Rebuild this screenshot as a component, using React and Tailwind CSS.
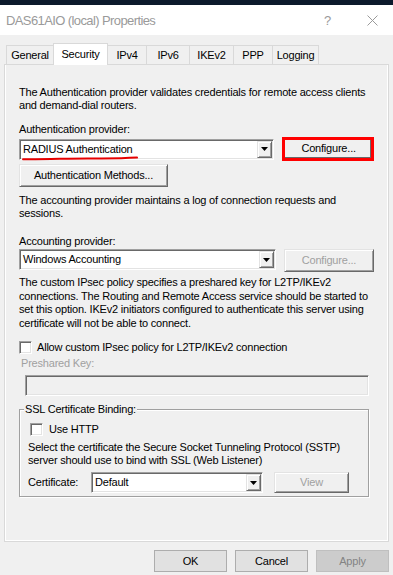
import React from 'react';

// Classic Win32 property sheet: "Security" page of the RRAS server properties.

const raised =
  'border border-t-[#e3e3e3] border-l-[#e3e3e3] border-r-[#696969] border-b-[#696969] shadow-[inset_1px_1px_0_#ffffff,inset_-1px_-1px_0_#a0a0a0]';
const sunken =
  'border border-t-[#a0a0a0] border-l-[#a0a0a0] border-r-white border-b-white shadow-[inset_1px_1px_0_#696969,inset_-1px_-1px_0_#e3e3e3]';

function Arrow() {
  return (
    <svg width="7" height="4" viewBox="0 0 7 4">
      <path d="M0 0h7L3.5 4z" fill="#000" />
    </svg>
  );
}

function Combo({ width, value, children }) {
  return (
    <div className={`relative flex items-center h-[21px] bg-white ${sunken} ${width}`}>
      <span className="flex-1 pl-[3px] truncate">{value}</span>
      <div className={`flex items-center justify-center w-[15px] h-[17px] mr-[1px] bg-[#f0f0f0] ${raised}`}>
        <Arrow />
      </div>
      {children}
    </div>
  );
}

function Button({ width, height = 'h-[23px]', disabled, children }) {
  return (
    <div
      className={`flex items-center justify-center bg-[#f0f0f0] ${raised} ${width} ${height} ${
        disabled ? 'text-[#a0a0a0]' : 'text-black'
      }`}
    >
      {children}
    </div>
  );
}

function Check({ className = '' }) {
  return <div className={`w-[13px] h-[13px] bg-white shrink-0 ${sunken} ${className}`} />;
}

const tabs = [
  { name: 'General', w: 'w-[48px]' },
  { name: 'Security', w: 'w-[55px]', active: true },
  { name: 'IPv4', w: 'w-[40px]' },
  { name: 'IPv6', w: 'w-[44px]' },
  { name: 'IKEv2', w: 'w-[45px]' },
  { name: 'PPP', w: 'w-[40px]' },
  { name: 'Logging', w: 'w-[47px]' },
];

export default function App() {
  return (
    <div className="w-[393px] h-[575px] overflow-hidden bg-[#f0f0f0] text-[11px] leading-[13px] tracking-[-0.2px] text-black font-['Liberation_Sans',Arial,sans-serif]">
      <div className="h-[5px] bg-[#0c1a2c]" />

      {/* title bar */}
      <div className="h-[30px] bg-white flex items-center pl-[6px] pr-[15px] text-[#9a9a9a]">
        <span className="flex-1 text-[13px] tracking-[-0.6px]">DAS61AIO (local) Properties</span>
        <span className="text-[13px] mr-[36px]">?</span>
        <svg width="11" height="11" viewBox="0 0 11 11">
          <path d="M0.5 0.5l10 10M10.5 0.5l-10 10" stroke="#9a9a9a" strokeWidth="1" />
        </svg>
      </div>

      {/* tabs */}
      <div className="flex items-end h-[21px] mt-[8px] pl-[6px]">
        {tabs.map((t, i) =>
          t.active ? (
            <div
              key={t.name}
              className={`relative z-10 -ml-px -mb-px h-[22px] flex items-center justify-center bg-white border border-b-0 border-[#d9d9d9] ${t.w}`}
            >
              {t.name}
            </div>
          ) : (
            <div
              key={t.name}
              className={`h-[19px] flex items-center justify-center bg-[#f0f0f0] border border-b-0 border-[#d9d9d9] ${
                i ? '-ml-px' : ''
              } ${t.w}`}
            >
              {t.name}
            </div>
          )
        )}
      </div>

      {/* page */}
      <div className="mx-[4px] h-[478px] border border-[#d9d9d9]">
        <div className="h-full border border-white border-t-0 px-[13px] pt-[21px]">
          <p>
            The Authentication provider validates credentials for remote access clients
            <br />
            and demand-dial routers.
          </p>

          <div className="mt-[11px]">Authentication provider:</div>
          <div className="mt-[1px] flex items-center h-[24px]">
            <Combo width="w-[259px]" value="RADIUS Authentication">
              <svg
                className="absolute left-[2px] top-[16px]"
                width="116"
                height="5"
                viewBox="0 0 116 5"
              >
                <path d="M1 3.2C30 3.4 45 2.2 70 2.4S105 2.2 115 1.6" stroke="#e60000" strokeWidth="2" fill="none" strokeLinecap="round" />
              </svg>
            </Combo>
            <div className="ml-[8px] w-[93px] h-[24px] border-[3px] border-[#ff0000] bg-[#f0f0f0] flex">
              <div className="flex-1 flex items-center justify-center border-r border-b border-[#696969] pl-[2px]">
                Configure...
              </div>
            </div>
          </div>

          <div className="mt-[3px]">
            <Button width="w-[149px]">Authentication Methods...</Button>
          </div>

          <p className="mt-[7px]">
            The accounting provider maintains a log of connection requests and
            <br />
            sessions.
          </p>

          <div className="mt-[15px]">Accounting provider:</div>
          <div className="mt-[1px] flex items-start h-[23px]">
            <Combo width="w-[259px]" value="Windows Accounting" />
            <div className="ml-[8px]">
              <Button width="w-[90px]" disabled>
                Configure...
              </Button>
            </div>
          </div>

          <p className="mt-[4px] leading-[13.5px]">
            The custom IPsec policy specifies a preshared key for L2TP/IKEv2
            <br />
            connections. The Routing and Remote Access service should be started to
            <br />
            set this option. IKEv2 initiators configured to authenticate this server using
            <br />
            certificate will not be able to connect.
          </p>

          <div className="mt-[11px] flex items-center h-[13px]">
            <Check />
            <span className="ml-[5px]">Allow custom IPsec policy for L2TP/IKEv2 connection</span>
          </div>

          <div className="mt-[3px] ml-[2px] text-[#a0a0a0]">Preshared Key:</div>
          <div className={`mt-[5px] ml-[6px] w-[344px] h-[21px] bg-[#f0f0f0] ${sunken}`} />

          {/* SSL group */}
          <div className="relative mt-[13px] w-[350px] border border-[#a0a0a0] shadow-[inset_1px_1px_0_#ffffff,1px_1px_0_#ffffff] pl-[8px] pt-[13px] pb-[3px]">
            <span className="absolute left-[4px] -top-[7px] px-[1px] bg-[#f0f0f0]">
              SSL Certificate Binding:
            </span>
            <div className="flex items-center h-[13px]">
              <Check className="ml-[2px]" />
              <span className="ml-[6px]">Use HTTP</span>
            </div>
            <p className="mt-[5px]">
              Select the certificate the Secure Socket Tunneling Protocol (SSTP)
              <br />
              server should use to bind with SSL (Web Listener)
            </p>
            <div className="mt-[5px] flex items-center h-[21px]">
              <span className="w-[63px]">Certificate:</span>
              <Combo width="w-[172px]" value="Default" />
              <div className="ml-[11px]">
                <Button width="w-[75px]" height="h-[21px]" disabled>
                  View
                </Button>
              </div>
            </div>
          </div>
        </div>
      </div>

      {/* dialog buttons */}
      <div className="mt-[8px] flex justify-end gap-[8px] pr-[4px]">
        <div className="w-[73px] h-[22px] flex items-center justify-center bg-[#e1e1e1] border border-[#adadad]">
          OK
        </div>
        <div className="w-[73px] h-[22px] flex items-center justify-center bg-[#e1e1e1] border border-[#adadad]">
          Cancel
        </div>
        <div className="w-[73px] h-[22px] flex items-center justify-center bg-[#cccccc] border border-[#bfbfbf] text-[#838383]">
          Apply
        </div>
      </div>
    </div>
  );
}
